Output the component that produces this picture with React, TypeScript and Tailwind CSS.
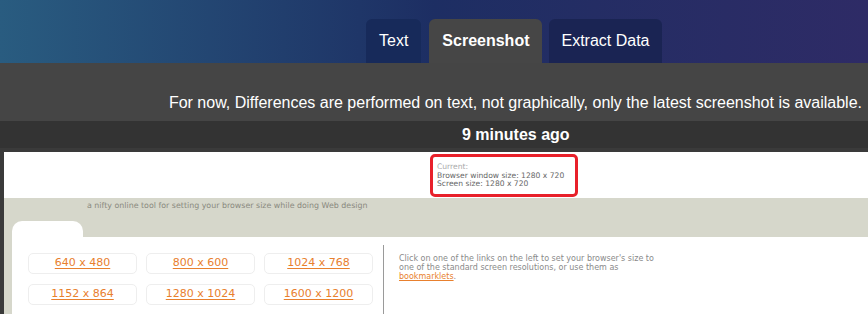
const sizes = ["640 x 480", "800 x 600", "1024 x 768", "1152 x 864", "1280 x 1024", "1600 x 1200"];

function Tabs() {
  return (
    <div className="flex items-end h-[63px] pl-[366px] bg-gradient-to-r from-[#295c80] via-[#1d2e63] to-[#2e2b66]">
      <div className="h-[44px] px-[13px] flex items-center rounded-t-[6px] bg-[#172a5a] text-white text-[16px]">
        Text
      </div>
      <div className="ml-[8px] h-[44px] px-[13px] flex items-center rounded-t-[6px] bg-[#464646] text-white text-[16px] font-bold">
        Screenshot
      </div>
      <div className="ml-[7px] h-[44px] px-[12px] flex items-center rounded-t-[6px] bg-[#1a2453] text-white text-[16px]">
        Extract Data
      </div>
    </div>
  );
}

// the captured page, scaled down
function CapturedPage() {
  return (
    <div className="bg-white font-['DejaVu_Sans',sans-serif]">
      <div className="h-[46px] flex items-start pl-[426px] pt-[2px]">
        <div className="border-[3px] border-[#e8202a] rounded-[5px] w-[148px] h-[43px] px-[4px] pt-[6px] text-[7.6px] leading-[8.5px] text-[#666]">
          <div className="text-[#aaa]">Current:</div>
          <div>Browser window size: 1280 x 720</div>
          <div>Screen size: 1280 x 720</div>
        </div>
      </div>
      <div className="bg-[#d6d7cb] pt-[2px] pl-[8px]">
        <div className="pl-[75px] text-[7.9px] leading-[11px] text-[#8a8a80]">
          a nifty online tool for setting your browser size while doing Web design
        </div>
        <div className="mt-[10px] w-[71px] h-[16px] bg-white rounded-t-[10px]" />
      </div>
      <div className="flex bg-[#d6d7cb] pl-[8px]">
        <div className="flex flex-1 bg-white pt-[16px] pl-[16px] h-[77px]">
          <div className="grid grid-cols-[109px_109px_109px] gap-x-[9px] gap-y-[10px] content-start">
            {sizes.map((s) => (
              <a
                key={s}
                href="#"
                className="h-[21px] flex items-center justify-center border border-[#eeeeee] rounded-[5px] text-[11px] text-[#e8802e] underline underline-offset-[2px]"
              >
                {s}
              </a>
            ))}
          </div>
          <div className="ml-[10px] mt-[-8px] w-px bg-[#9a9a9a]" />
          <div className="pl-[15px] pt-[1px] text-[8px] leading-[9px] text-[#8a8a8a]">
            Click on one of the links on the left to set your browser's size to
            <br />
            one of the standard screen resolutions, or use them as
            <br />
            <a href="#" className="text-[#e8802e] underline">
              bookmarklets
            </a>
            .
          </div>
        </div>
      </div>
    </div>
  );
}

export default function App() {
  return (
    <div className="w-[868px] h-[314px] overflow-hidden bg-[#3a3a3a] font-['Liberation_Sans',Arial,sans-serif]">
      <Tabs />
      <div className="h-[58px] bg-[#454545] flex items-end justify-end pr-[6px] pb-[8px]">
        <p className="text-white text-[16px] leading-[20px]">
          For now, Differences are performed on text, not graphically, only the latest screenshot is available.
        </p>
      </div>
      <div className="h-[27px] bg-[#333333] flex items-center pl-[462px]">
        <span className="text-white text-[16px] font-bold">9 minutes ago</span>
      </div>
      <div className="pt-[4px] pl-[4px]">
        <CapturedPage />
      </div>
    </div>
  );
}
